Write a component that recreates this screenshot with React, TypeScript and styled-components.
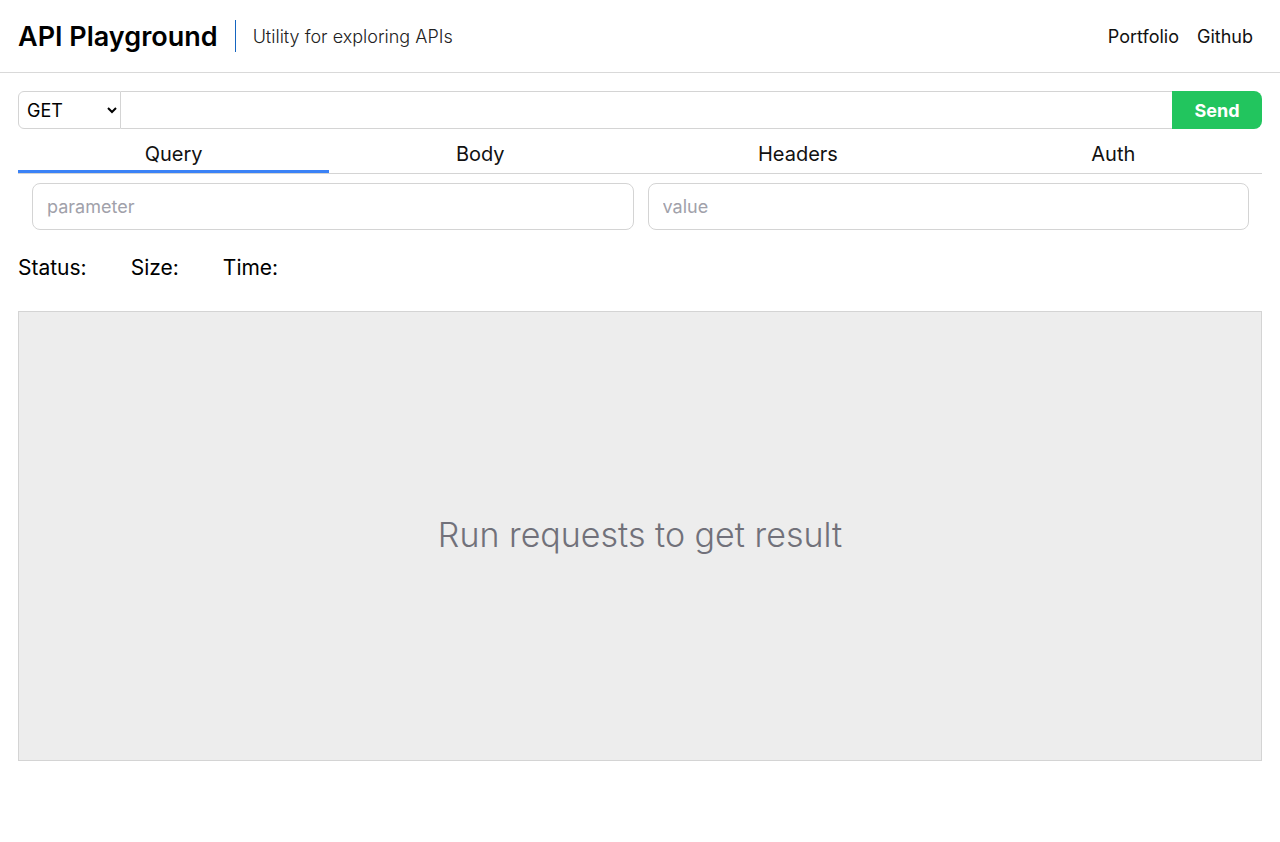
import React, { useState } from 'react';
import styled, { createGlobalStyle } from 'styled-components';

const GlobalStyle = createGlobalStyle`
  * {
    box-sizing: border-box;
  }
  body {
    margin: 0;
    background: #ffffff;
    color: #111111;
    font-family: Inter, "Noto Sans", sans-serif;
  }
`;

const TABS = ['Query', 'Body', 'Headers', 'Auth'];

const App = () => {
  const [tab, setTab] = useState('Query');

  return (
    <>
      <GlobalStyle />
      <Header>
        <Brand>
          <Title>API Playground</Title>
          <Divider />
          <Subtitle>Utility for exploring APIs</Subtitle>
        </Brand>
        <Nav>
          <NavLink href='#'>Portfolio</NavLink>
          <NavLink href='#'>Github</NavLink>
        </Nav>
      </Header>
      <Main>
        <RequestRow>
          <MethodSelect defaultValue='GET'>
            <option>GET</option>
            <option>POST</option>
            <option>PUT</option>
            <option>PATCH</option>
            <option>DELETE</option>
          </MethodSelect>
          <UrlInput type='text' />
          <SendButton>Send</SendButton>
        </RequestRow>
        <TabList>
          {TABS.map(name => (
            <Tab key={name} active={name === tab} onClick={() => setTab(name)}>
              {name}
            </Tab>
          ))}
        </TabList>
        <ParamRow>
          <ParamInput placeholder='parameter' />
          <ParamInput placeholder='value' />
        </ParamRow>
        <StatusRow>
          <StatusItem>Status:</StatusItem>
          <StatusItem>Size:</StatusItem>
          <StatusItem>Time:</StatusItem>
        </StatusRow>
        <ResultBox>
          <ResultText>Run requests to get result</ResultText>
        </ResultBox>
      </Main>
    </>
  );
};

const Header = styled.header`
  height: 73px;
  padding: 0 18px;
  display: flex;
  align-items: center;
  justify-content: space-between;
  border-bottom: 1px solid #d9d9d9;
`;

const Brand = styled.div`
  display: flex;
  align-items: center;
  gap: 17px;
`;

const Title = styled.h1`
  margin: 0;
  font-size: 27px;
  font-weight: 600;
  color: #000000;
`;

const Divider = styled.span`
  width: 1px;
  height: 32px;
  background: #1565c0;
`;

const Subtitle = styled.span`
  font-size: 18px;
  font-weight: 300;
  color: #222222;
`;

const Nav = styled.nav`
  display: flex;
`;

const NavLink = styled.a`
  padding: 0 9px;
  font-size: 18px;
  color: #111111;
  text-decoration: none;
`;

const Main = styled.main`
  padding: 18px 18px 0;
`;

const RequestRow = styled.div`
  display: flex;
  height: 38px;
`;

const MethodSelect = styled.select`
  width: 103px;
  height: 100%;
  padding: 0 4px;
  font-family: Inter, sans-serif;
  font-size: 18px;
  color: #000000;
  background: #ffffff;
  border: 1px solid #d4d4d4;
  border-radius: 6px 0 0 6px;
  outline: none;
`;

const UrlInput = styled.input`
  flex: 1;
  height: 100%;
  border: 1px solid #d4d4d4;
  border-left: none;
  border-right: none;
  padding: 0 10px;
  font-family: Inter, sans-serif;
  font-size: 17px;
  outline: none;
`;

const SendButton = styled.button`
  width: 90px;
  height: 100%;
  border: none;
  border-radius: 0 8px 8px 0;
  background: #22c55e;
  color: #ffffff;
  font-family: Inter, sans-serif;
  font-size: 18px;
  font-weight: 700;
  cursor: pointer;
`;

const TabList = styled.div`
  display: flex;
  border-bottom: 1px solid #d4d4d4;
`;

const Tab = styled.button<{ active?: boolean }>`
  flex-grow: 1;
  padding: 11px 0 2px;
  background: none;
  border: none;
  border-bottom: 3px solid ${p => (p.active ? '#3b82f6' : 'transparent')};
  font-family: Inter, sans-serif;
  font-size: 20px;
  line-height: 28px;
  color: #111111;
  cursor: pointer;
`;

const ParamRow = styled.div`
  display: flex;
  gap: 14px;
  padding: 9px 13px 0 14px;
`;

const ParamInput = styled.input`
  flex: 1;
  height: 47px;
  padding: 0 14px;
  border: 1px solid #d4d4d4;
  border-radius: 8px;
  font-family: Inter, sans-serif;
  font-size: 18px;
  color: #111111;
  outline: none;

  &::placeholder {
    color: #a1a1aa;
  }
`;

const StatusRow = styled.div`
  display: flex;
  gap: 44px;
  margin-top: 24px;
`;

const StatusItem = styled.span`
  font-size: 21px;
  line-height: 28px;
  color: #000000;
`;

const ResultBox = styled.section`
  margin-top: 29px;
  height: 450px;
  padding-bottom: 4px;
  display: flex;
  align-items: center;
  justify-content: center;
  background: #ededed;
  border: 1px solid #d4d4d4;
`;

const ResultText = styled.p`
  margin: 0;
  font-size: 34px;
  font-weight: 300;
  color: #71717a;
`;

export default App;
